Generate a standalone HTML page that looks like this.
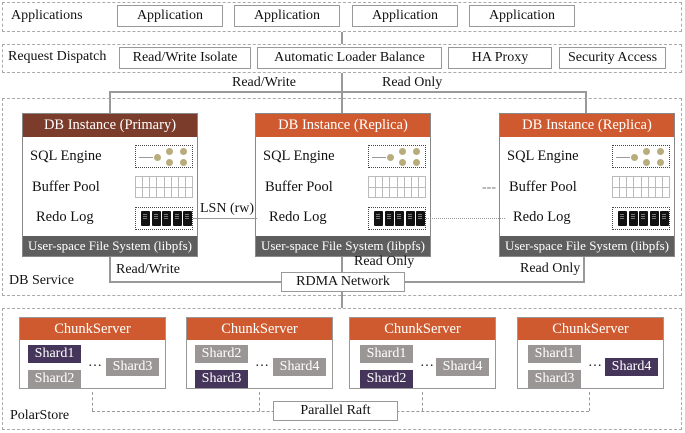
<!DOCTYPE html><html><head><style>
*{margin:0;padding:0;box-sizing:border-box;font-family:"Liberation Serif","Times New Roman","DejaVu Serif",serif}
body{width:685px;height:433px;background:#fff;position:relative;font-size:14px;color:#111;overflow:hidden}
.a{position:absolute}
.box{position:absolute;border:1px solid #999;background:#fff;text-align:center}
.dash{position:absolute;border:1px dashed #aaa}
.hl{position:absolute;height:2px;background:#999}
.vl{position:absolute;width:2px;background:#999}
.t{position:absolute;white-space:nowrap}
.inst{position:absolute;top:113px;width:176px;height:144px;border:1px solid #888;background:#fff}
.inst .h{position:absolute;left:0;top:0;width:100%;height:23px;color:#fff;text-align:center;line-height:23px;font-size:14.5px}
.inst .f{position:absolute;left:0;bottom:0;width:100%;height:20px;background:#5e5e5e;color:#fff;text-align:center;line-height:20px;font-size:13px;white-space:nowrap;overflow:hidden}
.lbl{position:absolute;font-size:14.5px;white-space:nowrap}
.db{position:absolute;left:112px;width:58px;height:23px;border:1px dotted #444}
.grid{position:absolute;left:112px;top:62px;width:58px;height:22px;display:grid;grid-template-columns:repeat(8,1fr);grid-template-rows:1fr 1fr;border-top:1px solid #bbb;border-left:1px solid #bbb}
.grid i{border-right:1px solid #bbb;border-bottom:1px solid #bbb}
.pgs{display:flex;gap:1.5px;padding:3px 0 0 5px}
.pg{flex:none;width:9px;height:15px;background:#111;border-radius:1px;position:relative}
.pg:after{content:"";position:absolute;left:2px;top:3px;width:4px;height:1px;background:#777;box-shadow:0 2px 0 #777,0 4px 0 #777}
.dot{position:absolute;width:7px;height:7px;border-radius:50%;background:#b9ac7c}
.cs{position:absolute;top:317px;width:147px;height:72px;border:1px solid #999;background:#fff}
.cs .h{height:22px;background:#cf5a30;color:#fff;text-align:center;line-height:22px;font-size:14.5px}
.sh{position:absolute;width:53px;height:18px;color:#fff;text-align:center;line-height:18px;font-size:14px;background:#9a9696}
.sh.d{background:#46355a}
</style></head><body>
<div class="dash" style="left:2px;top:2px;width:680px;height:30px"></div>
<div class="t" style="left:11px;top:8px">Applications</div>
<div class="box" style="left:117px;top:5px;width:106px;height:22px;line-height:20px">Application</div>
<div class="box" style="left:234px;top:5px;width:106px;height:22px;line-height:20px">Application</div>
<div class="box" style="left:352px;top:5px;width:106px;height:22px;line-height:20px">Application</div>
<div class="box" style="left:469px;top:5px;width:106px;height:22px;line-height:20px">Application</div>
<div class="vl" style="left:341px;top:32px;height:12px"></div>
<div class="dash" style="left:2px;top:44px;width:680px;height:29px"></div>
<div class="t" style="left:8px;top:49px">Request Dispatch</div>
<div class="box" style="left:119px;top:47px;width:132px;height:22px;line-height:20px">Read/Write Isolate</div>
<div class="box" style="left:257px;top:47px;width:185px;height:22px;line-height:20px">Automatic Loader Balance</div>
<div class="box" style="left:448px;top:47px;width:104px;height:22px;line-height:20px">HA Proxy</div>
<div class="box" style="left:559px;top:47px;width:107px;height:22px;line-height:20px">Security Access</div>
<div class="t" style="left:232px;top:75px">Read/Write</div>
<div class="t" style="left:382px;top:75px">Read Only</div>
<div class="vl" style="left:341px;top:73px;height:40px"></div>
<div class="hl" style="left:109px;top:91px;width:477px"></div>
<div class="vl" style="left:109px;top:91px;height:22px"></div>
<div class="vl" style="left:585px;top:91px;height:22px"></div>
<div class="dash" style="left:2px;top:98px;width:680px;height:198px"></div>
<div class="t" style="left:9px;top:273px">DB Service</div>

<div class="inst" style="left:22px"><div class="h" style="background:#7b3c2b">DB Instance (Primary)</div>
<div class="lbl" style="left:7px;top:34px">SQL Engine</div><div class="db" style="top:31px"><div class="dot" style="left:18px;top:8px"></div><div class="dot" style="left:30px;top:2px"></div><div class="dot" style="left:30px;top:13px"></div><div class="dot" style="left:44px;top:2px"></div><div class="dot" style="left:44px;top:13px"></div><div class="hl" style="left:3px;top:11px;width:14px;height:1px"></div></div>
<div class="lbl" style="left:9px;top:65px">Buffer Pool</div><div class="grid"><i></i><i></i><i></i><i></i><i></i><i></i><i></i><i></i><i></i><i></i><i></i><i></i><i></i><i></i><i></i><i></i></div>
<div class="lbl" style="left:13px;top:95px">Redo Log</div><div class="db" style="top:93px"><div class="pgs"><span class="pg"></span><span class="pg"></span><span class="pg"></span><span class="pg"></span><span class="pg"></span></div></div>
<div class="f">User-space File System (libpfs)</div></div>

<div class="inst" style="left:255px"><div class="h" style="background:#cf5a30">DB Instance (Replica)</div>
<div class="lbl" style="left:7px;top:34px">SQL Engine</div><div class="db" style="top:31px"><div class="dot" style="left:18px;top:8px"></div><div class="dot" style="left:30px;top:2px"></div><div class="dot" style="left:30px;top:13px"></div><div class="dot" style="left:44px;top:2px"></div><div class="dot" style="left:44px;top:13px"></div><div class="hl" style="left:3px;top:11px;width:14px;height:1px"></div></div>
<div class="lbl" style="left:9px;top:65px">Buffer Pool</div><div class="grid"><i></i><i></i><i></i><i></i><i></i><i></i><i></i><i></i><i></i><i></i><i></i><i></i><i></i><i></i><i></i><i></i></div>
<div class="lbl" style="left:13px;top:95px">Redo Log</div><div class="db" style="top:93px"><div class="pgs"><span class="pg"></span><span class="pg"></span><span class="pg"></span><span class="pg"></span><span class="pg"></span></div></div>
<div class="f">User-space File System (libpfs)</div></div>

<div class="inst" style="left:499px"><div class="h" style="background:#cf5a30">DB Instance (Replica)</div>
<div class="lbl" style="left:7px;top:34px">SQL Engine</div><div class="db" style="top:31px"><div class="dot" style="left:18px;top:8px"></div><div class="dot" style="left:30px;top:2px"></div><div class="dot" style="left:30px;top:13px"></div><div class="dot" style="left:44px;top:2px"></div><div class="dot" style="left:44px;top:13px"></div><div class="hl" style="left:3px;top:11px;width:14px;height:1px"></div></div>
<div class="lbl" style="left:9px;top:65px">Buffer Pool</div><div class="grid"><i></i><i></i><i></i><i></i><i></i><i></i><i></i><i></i><i></i><i></i><i></i><i></i><i></i><i></i><i></i><i></i></div>
<div class="lbl" style="left:13px;top:95px">Redo Log</div><div class="db" style="top:93px"><div class="pgs"><span class="pg"></span><span class="pg"></span><span class="pg"></span><span class="pg"></span><span class="pg"></span></div></div>
<div class="f">User-space File System (libpfs)</div></div>

<div class="t" style="left:200px;top:201px">LSN (rw)</div>
<div class="hl" style="left:193px;top:218px;width:64px;height:1px"></div>
<div class="a" style="left:426px;top:218px;width:79px;border-top:1px dotted #999"></div>
<div class="t" style="left:482px;top:180px;color:#777">---</div>
<div class="vl" style="left:109px;top:257px;height:25px"></div>
<div class="hl" style="left:109px;top:281px;width:172px"></div>
<div class="t" style="left:116px;top:262px">Read/Write</div>
<div class="box" style="left:281px;top:272px;width:124px;height:20px;line-height:18px">RDMA Network</div>
<div class="vl" style="left:341px;top:257px;height:15px"></div>
<div class="t" style="left:354px;top:254px">Read Only</div>
<div class="hl" style="left:404px;top:281px;width:180px"></div>
<div class="vl" style="left:583px;top:257px;height:26px"></div>
<div class="t" style="left:520px;top:261px">Read Only</div>
<div class="vl" style="left:341px;top:292px;height:16px"></div>

<div class="dash" style="left:2px;top:308px;width:680px;height:122px"></div>
<div class="t" style="left:10px;top:408px">PolarStore</div>
<div class="cs" style="left:19px"><div class="h">ChunkServer</div><div class="sh d" style="left:8px;top:27px">Shard1</div><div class="sh" style="left:8px;top:52px">Shard2</div><div class="t" style="left:68px;top:37px">…</div><div class="sh" style="left:86px;top:40px">Shard3</div></div>
<div class="cs" style="left:186px"><div class="h">ChunkServer</div><div class="sh" style="left:8px;top:27px">Shard2</div><div class="sh d" style="left:8px;top:52px">Shard3</div><div class="t" style="left:68px;top:37px">…</div><div class="sh" style="left:86px;top:40px">Shard4</div></div>
<div class="cs" style="left:349px"><div class="h">ChunkServer</div><div class="sh" style="left:10px;top:27px">Shard1</div><div class="sh d" style="left:10px;top:52px">Shard2</div><div class="t" style="left:70px;top:37px">…</div><div class="sh" style="left:86px;top:40px">Shard4</div></div>
<div class="cs" style="left:517px"><div class="h">ChunkServer</div><div class="sh" style="left:10px;top:27px">Shard1</div><div class="sh" style="left:10px;top:52px">Shard3</div><div class="t" style="left:70px;top:37px">…</div><div class="sh d" style="left:87px;top:40px">Shard4</div></div>
<div class="a" style="left:92px;top:392px;height:19px;border-left:1px dashed #999"></div>
<div class="a" style="left:259px;top:392px;height:19px;border-left:1px dashed #999"></div>
<div class="a" style="left:422px;top:392px;height:19px;border-left:1px dashed #999"></div>
<div class="a" style="left:589px;top:392px;height:19px;border-left:1px dashed #999"></div>
<div class="a" style="left:92px;top:411px;width:497px;border-top:1px dashed #999"></div>
<div class="box" style="left:273px;top:401px;width:125px;height:20px;line-height:18px">Parallel Raft</div>
</body></html>
